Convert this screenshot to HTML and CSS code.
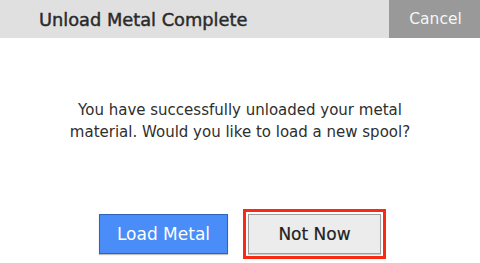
FILE: index.html
```html
<!DOCTYPE html>
<html>
<head>
<meta charset="utf-8">
<link rel="stylesheet" href="styles.css">
</head>
<body>
<div class="screen">
  <header class="bar">
    <div class="title">Unload Metal Complete</div>
    <div class="cancel">Cancel</div>
  </header>
  <main class="content">
    <p class="message">You have successfully unloaded your metal<br>material. Would you like to load a new spool?</p>
    <div class="actions">
      <button class="btn btn-primary">Load Metal</button>
      <button class="btn btn-secondary focused">Not Now</button>
    </div>
  </main>
</div>
</body>
</html>
```
FILE: styles.css
```css
* { box-sizing: border-box; }
html, body { margin: 0; padding: 0; background: #fff; }
body { font-family: "DejaVu Sans", sans-serif; }
.screen { width: 480px; height: 263px; display: flex; flex-direction: column; overflow: hidden; }
.bar { height: 38px; background: #e0e0e0; display: flex; align-items: stretch; }
.title { flex: 1; padding-left: 39px; font-size: 17.8px; font-weight: normal; -webkit-text-stroke: 0.45px #2a2a2a; color: #2a2a2a; display: flex; align-items: center; }
.cancel { width: 91px; background: #999999; color: #f6f6f6; font-size: 15.5px; display: flex; align-items: center; justify-content: center; padding-left: 2px; }
.content { flex: 1; display: flex; flex-direction: column; align-items: center; }
.message { margin: 61px 0 0; text-align: center; font-size: 15px; line-height: 22px; color: #2e2e2e; }
.actions { margin-top: 71px; display: flex; gap: 20px; }
.btn { height: 40px; font-family: "DejaVu Sans", sans-serif; font-size: 17px; border-radius: 0; padding: 0; }
.btn-primary { width: 129px; background: #4a8df8; color: #fff; border: 1px solid #2f63b8; box-shadow: 0 1px 1px rgba(0,0,0,0.25); }
.btn-secondary { width: 133px; background: #ececec; color: #222; border: 1px solid #9e9e9e; box-shadow: 0 1px 1px rgba(0,0,0,0.2); -webkit-text-stroke: 0.2px #222; }
.focused { outline: 3px solid #fa2a12; outline-offset: 2px; }
```
